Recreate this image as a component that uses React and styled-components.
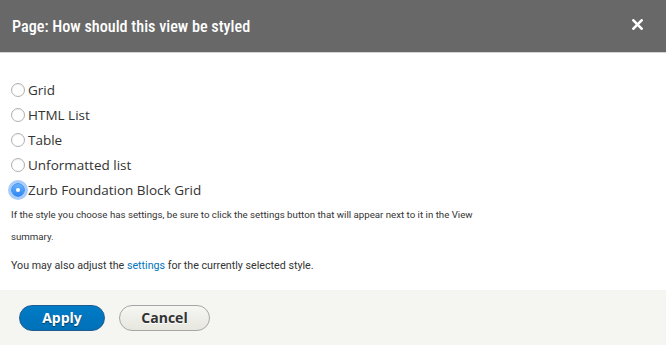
import React, { useState } from "react";
import styled, { createGlobalStyle } from "styled-components";

const Global = createGlobalStyle`
  html, body { margin: 0; padding: 0; background: #fff; }
  body { font-family: "Open Sans", "Liberation Sans", sans-serif; color: #333; }
`;

const Dialog = styled.div`
  width: 666px;
  height: 345px;
  display: flex;
  flex-direction: column;
  background: #fff;
`;

const Header = styled.div`
  height: 53px;
  box-sizing: border-box;
  background: #686868;
  border-bottom: 1px solid #d4d4d4;
  display: flex;
  align-items: center;
  justify-content: space-between;
  padding: 0 23px 0 12px;
`;

const Title = styled.h1`
  margin: 0;
  font-family: "Roboto Condensed", Roboto, sans-serif;
  font-size: 16.2px;
  font-weight: 500;
  color: #fff;
`;

const Close = styled.button`
  border: 0;
  background: none;
  padding: 0;
  width: 11px;
  height: 11px;
  margin-bottom: 4px;
  display: flex;
  cursor: pointer;
`;

const Body = styled.div`
  flex: 1;
  padding: 24px 11px 0 11px;
`;

const RadioList = styled.div`
  display: flex;
  flex-direction: column;
`;

const RadioRow = styled.label`
  display: flex;
  align-items: center;
  height: 25px;
  font-size: 13.5px;
  color: #333;
  gap: 3px;
`;

const RadioCircle = styled.span`
  width: 14px;
  height: 14px;
  box-sizing: border-box;
  border-radius: 50%;
  border: 1px solid ${(p) => (p.$checked ? "#3b8ff0" : "#b0b0b0")};
  background: ${(p) => (p.$checked ? "linear-gradient(#6ab2fc, #2f87f2)" : "#fff")};
  box-shadow: ${(p) => (p.$checked ? "0 0 0 3px rgba(110,170,250,0.6)" : "inset 0 1px 1px rgba(0,0,0,0.06)")};
  display: flex;
  align-items: center;
  justify-content: center;
  &::after {
    content: "";
    width: 4px;
    height: 4px;
    border-radius: 50%;
    background: #fff;
    display: ${(p) => (p.$checked ? "block" : "none")};
  }
`;

const Description = styled.p`
  margin: 2px 0 0;
  max-width: 490px;
  font-family: Roboto, sans-serif;
  font-size: 9.7px;
  line-height: 22px;
  color: #333;
`;

const Note = styled.p`
  margin: 8px 0 0;
  font-family: Roboto, sans-serif;
  font-size: 10.7px;
  line-height: 20px;
  color: #333;
`;

const Link = styled.a`
  color: #0074bd;
  text-decoration: none;
`;

const Footer = styled.div`
  height: 55px;
  background: #f5f5f2;
  display: flex;
  align-items: center;
  gap: 14px;
  padding: 0 19px;
`;

const Button = styled.button`
  height: 26px;
  box-sizing: border-box;
  border-radius: 13px;
  font-family: inherit;
  font-size: 14px;
  font-weight: 700;
  padding: 0;
  width: ${(p) => p.$w}px;
  border: 1px solid ${(p) => (p.$primary ? "#1e5c90" : "#a6a6a6")};
  color: ${(p) => (p.$primary ? "#fff" : "#333")};
  background: ${(p) =>
    p.$primary ? "linear-gradient(#007bc6, #0071b8)" : "linear-gradient(#f6f6f3, #e7e7df)"};
  text-shadow: ${(p) => (p.$primary ? "0 1px 1px rgba(0,0,0,0.5)" : "0 1px 0 #fff")};
`;

const options = ["Grid", "HTML List", "Table", "Unformatted list", "Zurb Foundation Block Grid"];

export default function App() {
  const [sel, setSel] = useState(4);
  return (
    <Dialog>
      <Global />
      <Header>
        <Title>Page: How should this view be styled</Title>
        <Close aria-label="Close">
          <svg width="11" height="11" viewBox="0 0 11 11">
            <path d="M1.4 1.4 L9.6 9.6 M9.6 1.4 L1.4 9.6" stroke="#fff" strokeWidth="2.6" strokeLinecap="square" />
          </svg>
        </Close>
      </Header>
      <Body>
        <RadioList>
          {options.map((o, i) => (
            <RadioRow key={o} onClick={() => setSel(i)}>
              <RadioCircle $checked={sel === i} />
              {o}
            </RadioRow>
          ))}
        </RadioList>
        <Description>
          If the style you choose has settings, be sure to click the settings button that will appear next to it in the View summary.
        </Description>
        <Note>
          You may also adjust the <Link href="#">settings</Link> for the currently selected style.
        </Note>
      </Body>
      <Footer>
        <Button $primary $w={86}>Apply</Button>
        <Button $w={91}>Cancel</Button>
      </Footer>
    </Dialog>
  );
}
